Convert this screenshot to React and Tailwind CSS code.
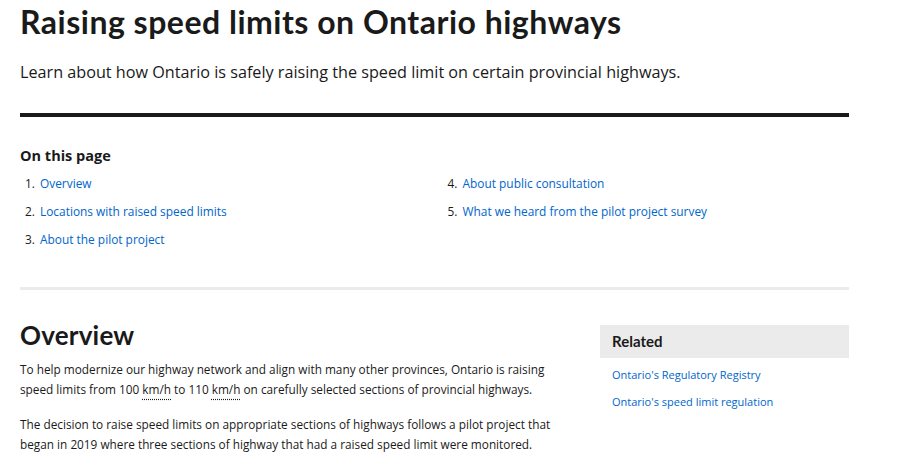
export default function App() {
  const toc = [
    "Overview",
    "Locations with raised speed limits",
    "About the pilot project",
    "About public consultation",
    "What we heard from the pilot project survey",
  ];

  return (
    <div className="bg-white w-[900px] h-[475px] overflow-hidden px-5 text-[#1a1a1a] font-['Open_Sans',sans-serif]">
      <div className="w-[829px]">

        <h1 className="text-[32px] leading-[44px] font-bold font-['Lato',sans-serif] tracking-[0.5px]">
          Raising speed limits on Ontario highways
        </h1>

        <p className="mt-[14px] text-[16.2px] leading-[28px]">
          Learn about how Ontario is safely raising the speed limit on certain provincial highways.
        </p>

        <div className="mt-[27px] h-[4px] bg-[#1a1a1a]"></div>

        <h2 className="mt-[29px] text-[14.5px] leading-[20px] font-bold">On this page</h2>

        <ol className="mt-[7px] grid grid-cols-2 grid-rows-3 grid-flow-col gap-x-4 gap-y-2 text-[11.9px] leading-[20px]">
          {toc.map((t, i) => (
            <li key={t} className="flex pl-[5px]">
              <span className="w-[15px]">{i + 1}.</span>
              <a href="#" className="text-[#0066cc]">{t}</a>
            </li>
          ))}
        </ol>

        <div className="mt-[38px] h-[3px] bg-[#ebebeb]"></div>

        <div className="mt-[29px] flex gap-10">
          <div className="w-[540px]">
            <h2 className="text-[26px] leading-[32px] font-bold font-['Lato',sans-serif] tracking-[0.2px]">Overview</h2>
            <p className="mt-[9px] text-[11.8px] leading-[19.5px]">
              To help modernize our highway network and align with many other provinces, Ontario is raising speed limits from 100{" "}
              <abbr title="kilometres per hour" className="underline decoration-dotted underline-offset-[5px]">km/h</abbr> to 110{" "}
              <abbr title="kilometres per hour" className="underline decoration-dotted underline-offset-[5px]">km/h</abbr> on carefully selected sections of provincial highways.
            </p>
            <p className="mt-4 text-[11.8px] leading-[19.5px]">
              The decision to raise speed limits on appropriate sections of highways follows a pilot project that began in 2019 where three sections of highway that had a raised speed limit were monitored.
            </p>
          </div>

          <aside className="mt-[6px] w-[249px]">
            <div className="bg-[#ebebeb] h-[33px] px-3 flex items-center">
              <h3 className="text-[15px] font-bold font-['Lato',sans-serif]">Related</h3>
            </div>
            <ul className="mt-[7px] px-3 text-[11px] leading-[20px] flex flex-col gap-[7px]">
              <li><a href="#" className="text-[#0066cc]">Ontario's Regulatory Registry</a></li>
              <li><a href="#" className="text-[#0066cc]">Ontario's speed limit regulation</a></li>
            </ul>
          </aside>
        </div>

      </div>
    </div>
  );
}
